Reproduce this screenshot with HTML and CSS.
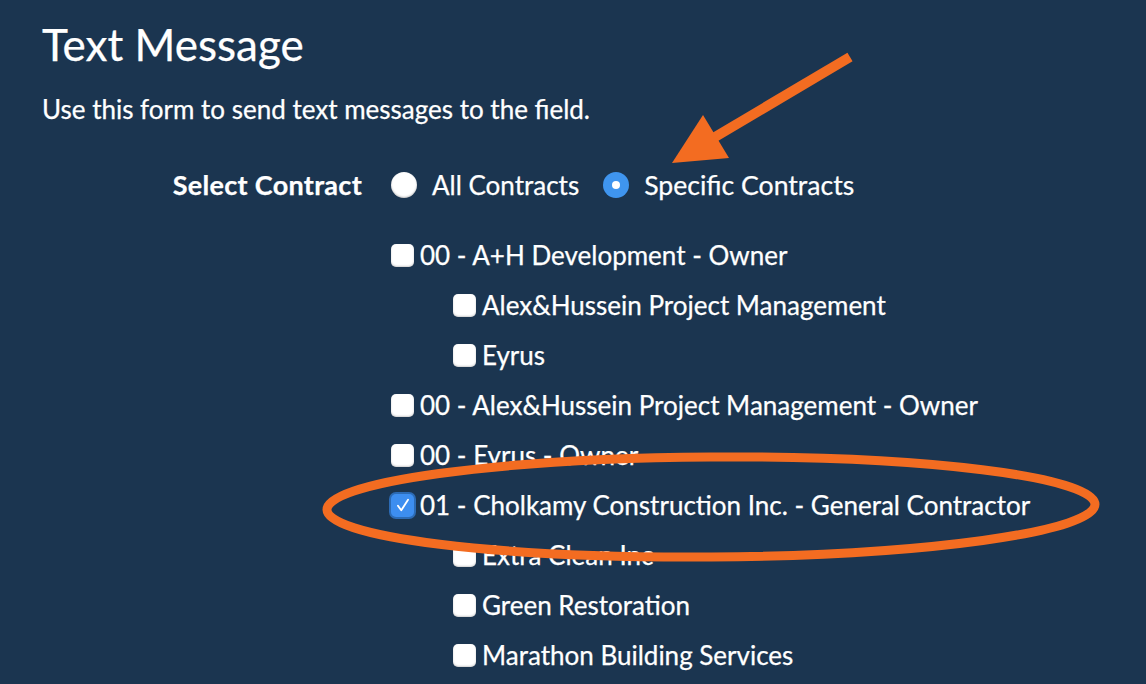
FILE: index.html
```html
<!DOCTYPE html>
<html lang="en">
<head>
<meta charset="utf-8">
<title>Text Message</title>
<link rel="stylesheet" href="styles.css">
</head>
<body>
<main class="page">
  <h1 class="title">Text Message</h1>
  <p class="intro">Use this form to send text messages to the field.</p>

  <div class="field">
    <div class="field-label">Select Contract</div>
    <div class="field-body">
      <div class="radios">
        <label class="radio-opt"><span class="radio"></span>All Contracts</label>
        <label class="radio-opt"><span class="radio on"></span>Specific Contracts</label>
      </div>
      <ul class="tree">
        <li class="item"><span class="box"></span>00 - A+H Development - Owner</li>
        <li class="item sub"><span class="box"></span>Alex&amp;Hussein Project Management</li>
        <li class="item sub"><span class="box"></span>Eyrus</li>
        <li class="item"><span class="box"></span>00 - Alex&amp;Hussein Project Management - Owner</li>
        <li class="item"><span class="box"></span>00 - Eyrus - Owner</li>
        <li class="item"><span class="box on"><svg viewBox="0 0 24 24" width="22" height="22"><path d="M6.5 12.8l3.6 5 7.4-11.6" fill="none" stroke="#fff" stroke-width="2" stroke-linecap="round" stroke-linejoin="round"/></svg></span>01 - Cholkamy Construction Inc. - General Contractor</li>
        <li class="item sub"><span class="box"></span>Extra Clean Inc</li>
        <li class="item sub"><span class="box"></span>Green Restoration</li>
        <li class="item sub"><span class="box"></span>Marathon Building Services</li>
      </ul>
    </div>
  </div>

  <svg class="annotations" viewBox="0 0 1146 684" width="1146" height="684">
    <line x1="850" y1="57" x2="710" y2="140" stroke="#f36c21" stroke-width="10"/>
    <polygon points="703,115 672,163 729,158" fill="#f36c21"/>
    <ellipse cx="711" cy="507" rx="384" ry="50" transform="rotate(-0.4 711 507)" fill="none" stroke="#f36c21" stroke-width="9"/>
  </svg>
</main>
</body>
</html>
```

FILE: styles.css
```css
* { box-sizing: border-box; }

html, body {
  margin: 0;
  padding: 0;
  background: #1b3550;
}

body {
  width: 1146px;
  height: 684px;
  overflow: hidden;
  color: #ffffff;
  font-family: "Lato", "Open Sans", sans-serif;
  -webkit-text-stroke: 0.25px #ffffff;
}

.page {
  position: relative;
  padding: 18px 0 0 42px;
  height: 684px;
}

.title {
  margin: 0;
  font-size: 44px;
  font-weight: 400;
  line-height: 53px;
}

.intro {
  margin: 22px 0 0;
  font-size: 26px;
  line-height: 32px;
}

.field {
  display: grid;
  grid-template-columns: 320px 1fr;
  column-gap: 29px;
  margin-top: 40px;
}

.field-label {
  text-align: right;
  font-weight: 700;
  font-size: 27px;
  letter-spacing: 0.3px;
  height: 40px;
  line-height: 40px;
}

.radios {
  display: flex;
  align-items: center;
  gap: 24px;
  height: 40px;
  font-size: 26px;
}

.radio-opt {
  display: flex;
  align-items: center;
  gap: 15px;
}

.radio-opt + .radio-opt {
  font-size: 26.6px;
}

.radio {
  width: 26px;
  height: 26px;
  border-radius: 50%;
  background: #ffffff;
  box-shadow: inset 0 -1px 2px rgba(0,0,0,0.25);
  display: flex;
  align-items: center;
  justify-content: center;
}

.radio.on {
  background: #3f95ef;
  box-shadow: none;
}

.radio.on::after {
  content: "";
  width: 8px;
  height: 8px;
  border-radius: 50%;
  background: #ffffff;
}

.tree {
  list-style: none;
  margin: 25px 0 0;
  padding: 0;
}

.item {
  display: flex;
  align-items: center;
  gap: 6px;
  height: 50px;
  font-size: 26px;
}

.item.sub {
  padding-left: 62px;
}

.box {
  width: 23px;
  height: 23px;
  border-radius: 5px;
  background: #ffffff;
  box-shadow: inset 0 -1px 2px rgba(0,0,0,0.2);
  display: flex;
  align-items: center;
  justify-content: center;
  flex: none;
}

.box.on {
  background: #3d8ef0;
  box-shadow: 0 0 0 2px #2c6bb5;
  border-radius: 5px;
}

.annotations {
  position: absolute;
  top: 0;
  left: 0;
  pointer-events: none;
}
```
